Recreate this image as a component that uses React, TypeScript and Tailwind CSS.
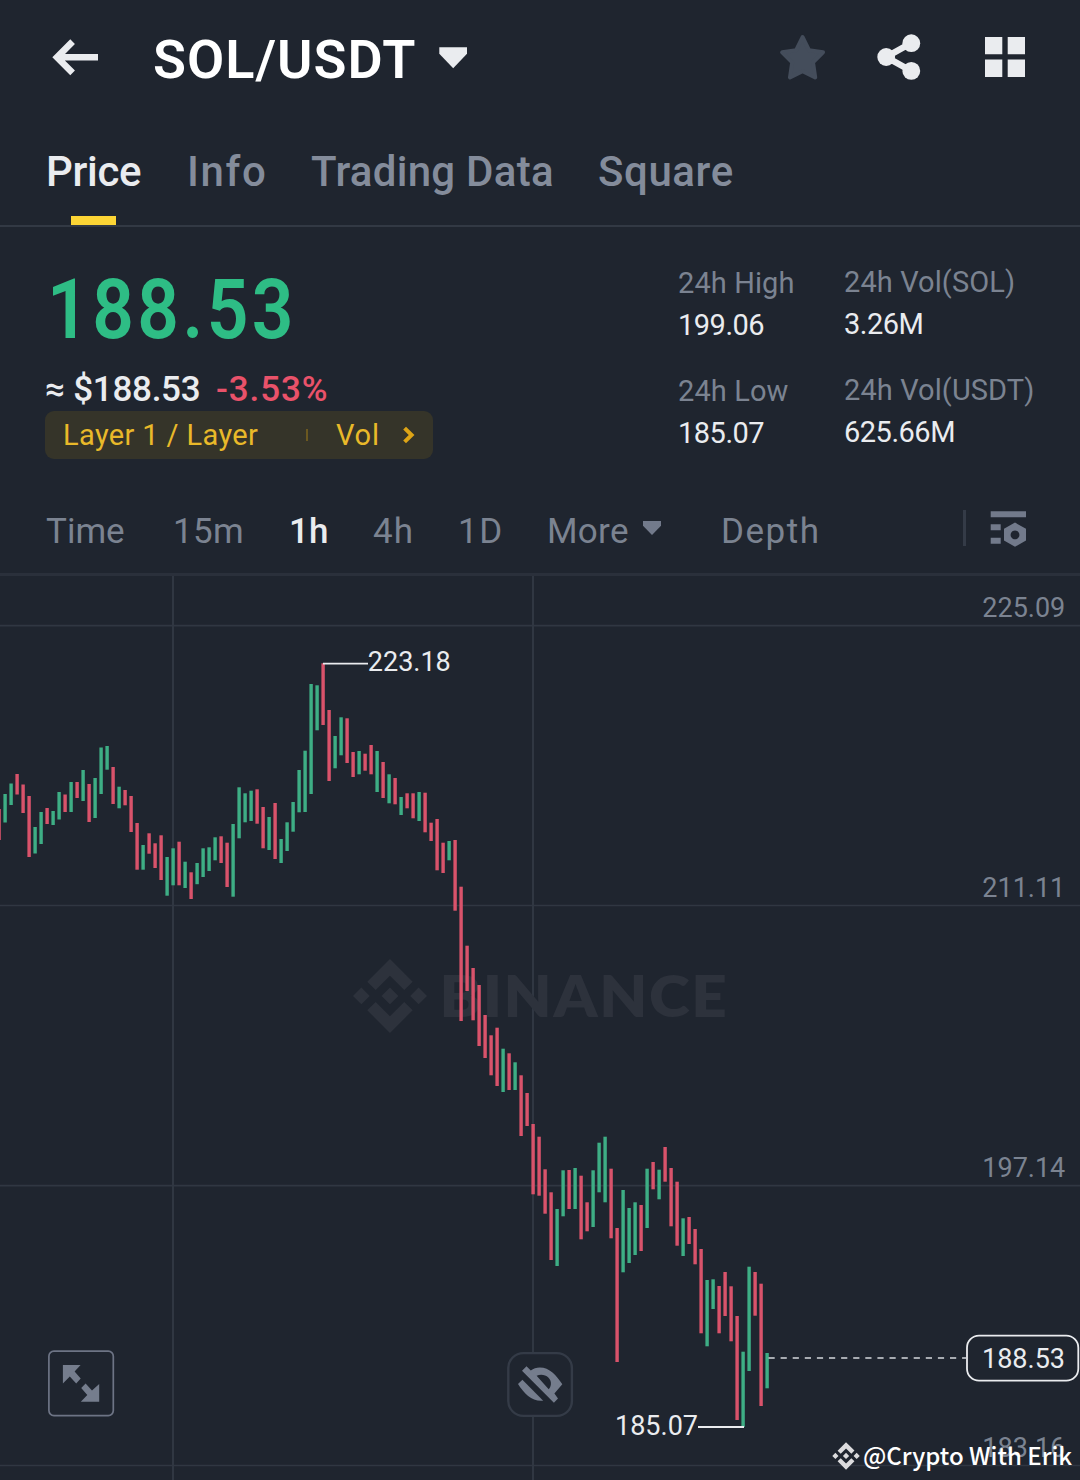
import React from "react";

type Candle = [dir: "u" | "d", high: number, low: number];

const CANDLES: Candle[] = [
  ["d", 809, 840], ["u", 794, 822.5], ["u", 783.5, 805], ["d", 774, 794.5], ["d", 784.5, 813],
  ["d", 796, 857], ["u", 827, 853.5], ["u", 812, 844], ["d", 808, 824], ["u", 811, 825],
  ["u", 792, 819.5], ["d", 794.5, 812], ["u", 782, 812], ["d", 782, 798], ["u", 770, 801],
  ["d", 784, 822], ["u", 778, 818], ["u", 747.5, 794], ["u", 746, 769.7], ["d", 767, 804],
  ["u", 786.7, 808.3], ["d", 790, 805.3], ["d", 796, 832], ["d", 823, 869.7], ["u", 845, 869.7],
  ["d", 833.3, 853.7], ["d", 843.3, 868], ["d", 835.3, 880], ["u", 857, 895.7], ["u", 848.3, 885.3],
  ["d", 841.7, 885.3], ["u", 861.7, 888], ["d", 872.3, 899], ["u", 863, 884.2], ["u", 848.3, 877],
  ["u", 847.3, 871], ["u", 837.3, 860.3], ["d", 836.3, 863], ["d", 842.7, 887], ["u", 824, 896.7],
  ["u", 787.3, 838.3], ["u", 793.3, 822.3], ["u", 790.7, 821], ["d", 789.3, 823.7], ["d", 807, 848.3],
  ["u", 817, 850], ["d", 803, 859], ["u", 839, 863], ["u", 822.3, 851], ["u", 802, 831.7],
  ["u", 770, 812.3], ["u", 750.7, 812], ["u", 684, 794], ["u", 685.3, 730.3], ["d", 663.3, 725],
  ["d", 710, 781], ["u", 736, 768.3], ["u", 717.3, 755.3], ["d", 718.3, 763], ["d", 752, 777],
  ["u", 751, 774.3], ["d", 753.7, 770.7], ["d", 745, 774.3], ["u", 751, 792], ["d", 762, 798],
  ["u", 774.3, 803.3], ["d", 778, 804.3], ["u", 797, 815], ["d", 793.3, 808.3], ["d", 793.3, 818.3],
  ["u", 792, 821], ["d", 792.7, 832.3], ["d", 822.7, 841], ["d", 819, 870.3], ["d", 842.7, 873],
  ["u", 841, 860.3], ["d", 840, 910.7], ["d", 886.7, 1021], ["d", 945.7, 991], ["d", 968, 1020.3],
  ["d", 985, 1046], ["d", 1015, 1058], ["d", 1035.3, 1075.3], ["d", 1027.7, 1086], ["u", 1048.7, 1092],
  ["d", 1053.3, 1090], ["u", 1062.3, 1090], ["d", 1075.3, 1136], ["d", 1093, 1126], ["d", 1124, 1194.3],
  ["d", 1136.7, 1195.7], ["d", 1169.3, 1213.7], ["d", 1192.3, 1260], ["u", 1209, 1266], ["u", 1170.3, 1216.3],
  ["d", 1170, 1209], ["u", 1168, 1209], ["d", 1175.7, 1239.3], ["d", 1202.3, 1231.3], ["u", 1170.3, 1227],
  ["u", 1142.7, 1192.3], ["u", 1136.7, 1202.3], ["d", 1168.7, 1238.3], ["d", 1228, 1362], ["u", 1190, 1272.3],
  ["u", 1208, 1263], ["u", 1202.3, 1255], ["d", 1205, 1251], ["u", 1168.7, 1228], ["d", 1162, 1189.3],
  ["u", 1169.7, 1199.3], ["d", 1147, 1181.7], ["d", 1168, 1226.3], ["d", 1181.7, 1245.7], ["u", 1218.3, 1256],
  ["d", 1217, 1244], ["d", 1229, 1264.3], ["d", 1249, 1333.3], ["u", 1280, 1346.3], ["u", 1279.3, 1309],
  ["d", 1286, 1333.3], ["d", 1272, 1316], ["d", 1286.3, 1341.3], ["d", 1316, 1420], ["u", 1351.7, 1427],
  ["u", 1266.7, 1371], ["d", 1272, 1315.7], ["d", 1283.7, 1406], ["u", 1353, 1388.3],
];

const BINANCE_MARK =
  "M16.624 13.9202l2.7175 2.7154-7.353 7.353-7.353-7.352 2.7175-2.7164 4.6355 4.6595 4.6356-4.6595zm4.6366-4.6366L24 12l-2.7154 2.7164L18.5682 12l2.6924-2.7164zm-9.272.001l2.7163 2.6914-2.7164 2.7174v-.001L9.2721 12l2.7164-2.7154zm-9.2722-.001L5.4088 12l-2.6914 2.6924L0 12l2.7164-2.7164zM11.9885.0115l7.353 7.329-2.7174 2.7154-4.6356-4.6356-4.6355 4.6595-2.7174-2.7154 7.353-7.353z";

function Header() {
  return (
    <header className="flex h-[117px] shrink-0 items-start pl-[52px] pt-[33px] text-[#eaecef]">
      <svg className="mt-[5px] h-[38px] w-[47px]" viewBox="52 38 47 38" fill="none" stroke="currentColor">
        <path d="M98 57.3H57M72.6 41.7L57 57.3l15.6 15.6" strokeWidth="6.6" strokeMiterlimit="10" />
      </svg>
      <h1 className="ml-[54px] w-[286px] whitespace-nowrap text-[54px] font-semibold leading-none tracking-[1.03px] text-white">
        SOL/USDT
      </h1>
      <svg className="mt-[14px] h-[22px] w-[28px]" viewBox="0 0 28 22" fill="currentColor">
        <path d="M0.3 0.3H28V6.8L14.2 21.3L0.3 6.8Z" />
      </svg>
      <svg className="ml-[313px] mt-px h-[46px] w-[46px]" viewBox="780 34 46 46" fill="#444d5b" stroke="#444d5b" strokeWidth="4" strokeLinejoin="round">
        <path d="M802.6 37L809 50.2L823 52.3L813 62.4L815.2 77.4L802.6 71.2L790 77.4L792.2 62.4L782.2 52.3L796.2 50.2Z" />
      </svg>
      <svg className="ml-[51px] mt-px h-[46px] w-[44px]" viewBox="877 34 44 46" fill="currentColor" stroke="currentColor">
        <path d="M911.3 43L886.2 57L911.3 71" fill="none" strokeWidth="6.5" />
        <circle cx="886.2" cy="57" r="8.9" stroke="none" />
        <circle cx="911.3" cy="43.2" r="8.9" stroke="none" />
        <circle cx="911.3" cy="70.9" r="8.9" stroke="none" />
      </svg>
      <svg className="ml-[64px] mt-[4px] h-[40px] w-[40px]" viewBox="0 0 40 40" fill="currentColor">
        <path d="M0 0H17.3V17.2H0ZM22.7 0H40V17.2H22.7ZM0 22.5H17.3V40H0ZM22.7 22.5H40V40H22.7Z" />
      </svg>
    </header>
  );
}

function Tabs() {
  return (
    <nav className="flex h-[110px] shrink-0 items-start whitespace-nowrap border-b-2 border-[#323944] pl-[46px] text-[42px] font-medium leading-none text-[#848c9b]">
      <div className="relative h-[108px] w-[141px] pt-[34px] tracking-[-0.3px] text-[#eaecef]">
        Price
        <span className="absolute bottom-0 left-[25px] h-[9px] w-[45px] bg-[#fcd535]" />
      </div>
      <div className="w-[124px] pt-[34px] tracking-[1.6px]">Info</div>
      <div className="w-[287px] pt-[34px] tracking-[0.28px]">Trading Data</div>
      <div className="pt-[34px] tracking-[0.6px]">Square</div>
    </nav>
  );
}

function Stat({ label, value }: { label: string; value: string }) {
  return (
    <div className="h-[108px] whitespace-nowrap text-[29px] leading-none">
      <div className="h-[42px] tracking-[0.1px] text-[#7b8391]">{label}</div>
      <div className="tracking-[-0.5px] text-[#eaecef]">{value}</div>
    </div>
  );
}

function Summary() {
  return (
    <section className="flex h-[260px] shrink-0 pl-[45px] pt-[41px]">
      <div className="w-[633px]">
        <div className="ml-[2px] h-[104px] origin-left scale-x-[0.88] text-[83px] font-semibold leading-none tracking-[3.9px] text-[#2ebd85]">
          188.53
        </div>
        <div className="flex h-[39px] whitespace-nowrap text-[35px] font-medium leading-none">
          <span className="w-[171px] tracking-[-0.27px] text-[#eaecef]">≈ $188.53</span>
          <span className="tracking-[0.9px] text-[#e9526a]">-3.53%</span>
        </div>
        <div className="flex h-[48px] w-[388px] items-center whitespace-nowrap rounded-[9px] bg-[#353429] pl-[18px] text-[29px] leading-none text-[#e9b929]">
          <span className="w-[243px] pt-px tracking-[0.37px]">Layer 1 / Layer</span>
          <span className="h-[12px] w-[2px] bg-[#6b5820]" />
          <span className="ml-[28px] w-[67px] pt-px tracking-[0.8px]">Vol</span>
          <svg className="h-[18px] w-[12px]" viewBox="0 0 12 18" fill="none" stroke="#dda416" strokeWidth="4">
            <path d="M1.6 2.1L8.6 9L1.6 15.9" />
          </svg>
        </div>
      </div>
      <div className="w-[166px] pt-px">
        <Stat label="24h High" value="199.06" />
        <Stat label="24h Low" value="185.07" />
      </div>
      <div>
        <Stat label="24h Vol(SOL)" value="3.26M" />
        <Stat label="24h Vol(USDT)" value="625.66M" />
      </div>
    </section>
  );
}

function Intervals() {
  return (
    <nav className="flex h-[89px] shrink-0 items-start whitespace-nowrap border-b-[3px] border-[#2a303b] pl-[46px] pt-[27px] text-[35px] leading-none text-[#7b8391]">
      <span className="w-[127px]">Time</span>
      <span className="w-[116px] tracking-[0.3px]">15m</span>
      <span className="w-[84px] font-medium text-[#eaecef]">1h</span>
      <span className="w-[85px] tracking-[1.2px]">4h</span>
      <span className="w-[89px] tracking-[1.6px]">1D</span>
      <span className="w-[96px] tracking-[0.3px]">More</span>
      <svg className="mt-[7px] h-[14px] w-[18px]" viewBox="0 0 18 14" fill="#727a8b">
        <path d="M0 0H18V4.7L9 14L0 4.7Z" />
      </svg>
      <span className="ml-[60px] w-[242px] tracking-[1.5px]">Depth</span>
      <span className="-mt-[4px] h-[36px] w-[3px] bg-[#343b47]" />
      <svg className="-mt-[3px] ml-[24px] h-[36px] w-[37px]" viewBox="990 511 37 36" fill="#727a8b">
        <path d="M990.7 511.3H1026V517.3H990.7ZM990.7 524.3H1000.7V530.3H990.7ZM990.7 537.7H1000.7V543.7H990.7Z" />
        <path fillRule="evenodd" d="M1015 522.6L1026 528.8V540.6L1015 546.8L1004 540.6V528.8ZM1015 530.5a4.4 4.4 0 1 0 0.01 0Z" />
      </svg>
    </nav>
  );
}

function Chart() {
  return (
    <svg className="block h-[904px] w-[1080px]" viewBox="0 576 1080 904" fontFamily="Roboto, sans-serif" fontSize="27">
      <g stroke="#303742" strokeWidth="1.6">
        <path d="M0 625.6H1080M0 905.5H1080M0 1185.6H1080M0 1465.5H1080" />
        <path d="M173 576V1480M533 576V1480" strokeWidth="2" />
      </g>

      <g fill="#2d323c">
        <path transform="translate(353 959) scale(3.083)" d={BINANCE_MARK} />
        <text x="439.5" y="1016.5" fontFamily="Lato, sans-serif" fontWeight="800" fontSize="56.5" letterSpacing="1.5" textLength="289" lengthAdjust="spacingAndGlyphs">
          BINANCE
        </text>
      </g>

      {CANDLES.map(([dir, high, low], i) => (
        <rect key={i} x={-2.6 + i * 6} y={high} width="3.4" height={low - high} fill={dir === "u" ? "#3eae85" : "#d9536b"} />
      ))}

      <g fill="#7b8391" textAnchor="end">
        <text x="1065.3" y="617">225.09</text>
        <text x="1065.3" y="897">211.11</text>
        <text x="1065.3" y="1177">197.14</text>
        <text x="1065.3" y="1457">183.16</text>
      </g>

      <g stroke="#eaecef" strokeWidth="1.8" fill="none">
        <path d="M323 663.6H368M698 1427H744" />
        <path d="M768.5 1358H966" strokeDasharray="6.2 5.9" strokeWidth="1.6" stroke="#d5d8dd" />
        <rect x="967" y="1335.7" width="111.3" height="45" rx="12" fill="#1f252f" />
      </g>
      <g fill="#eaecef">
        <text x="367.8" y="671">223.18</text>
        <text x="615" y="1435">185.07</text>
        <text x="982" y="1368">188.53</text>
      </g>

      <rect x="48.9" y="1351.2" width="64.4" height="64.4" rx="5" fill="#1f252f" stroke="#6d7485" strokeWidth="1.7" />
      <g fill="#757d8d">
        <path d="M62.9 1365H80.6L74.6 1371.4L80.7 1378.6L76.2 1383.4L69.8 1376.6L62.9 1383.4Z" />
        <path d="M99.2 1401.7H80.8L87.3 1395L81.2 1388L85.6 1383.5L92 1390.5L99.2 1384Z" />
      </g>

      <rect x="508.3" y="1353.1" width="63.6" height="62.8" rx="15" fill="#1f252f" stroke="#343b47" strokeWidth="2.4" />
      <g fill="#757d8d">
        <path d="M526.5 1366.3L522 1370.7L553.9 1402.8L558 1398.4L554.4 1393.6L562.3 1384.3C556.5 1375.5 549.5 1367.6 539.8 1367.6C536.3 1367.6 533.5 1368.8 530.8 1370.6ZM536.6 1375.8C543.5 1372.6 551.8 1377.5 550.9 1384.3C550.6 1386.6 549.9 1388.2 548.7 1389.3Z" fillRule="evenodd" />
        <path d="M518 1384L522.4 1379.8L543.2 1400.7C532.5 1402 524.5 1394 518 1384Z" />
      </g>

      <path transform="translate(832.3 1442.2) scale(1.145)" d={BINANCE_MARK} fill="#dcdcde" />
      <text x="863" y="1465" fontFamily="'Noto Sans CJK SC', sans-serif" fontWeight="500" fontSize="24" fill="#ffffff">
        @Crypto With Erik
      </text>
    </svg>
  );
}

export default function App() {
  return (
    <main className="flex h-[1480px] w-[1080px] flex-col overflow-hidden bg-[#1f252f] font-[Roboto,sans-serif]">
      <Header />
      <Tabs />
      <Summary />
      <Intervals />
      <Chart />
    </main>
  );
}
